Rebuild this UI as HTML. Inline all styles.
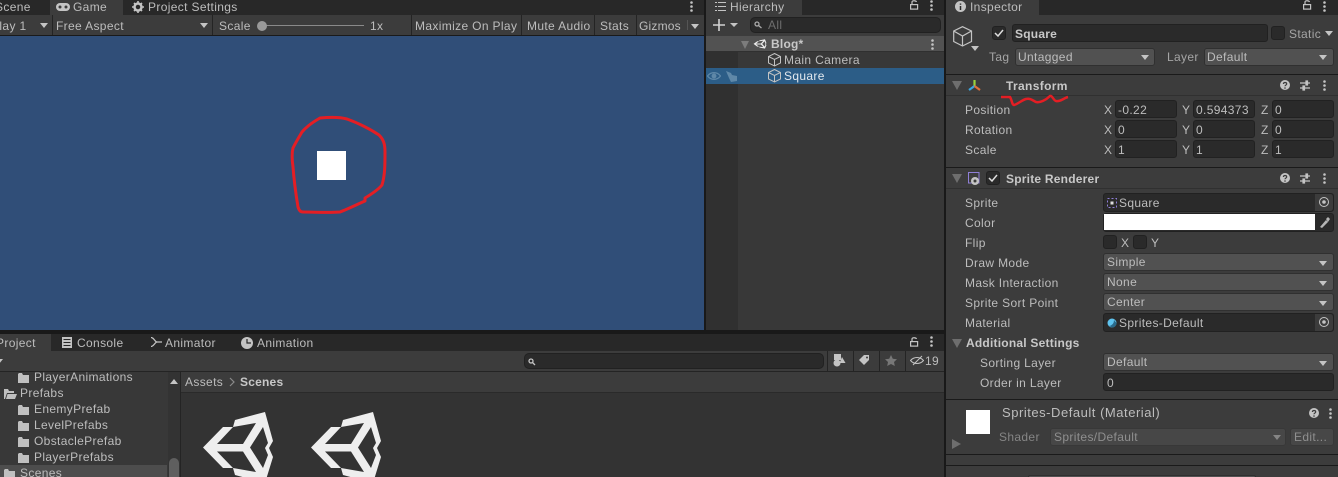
<!DOCTYPE html>
<html><head><meta charset="utf-8"><style>
html,body{margin:0;padding:0;background:#282828}
#r{position:relative;width:1338px;height:477px;overflow:hidden;background:#282828;font:12px/16px "Liberation Sans",sans-serif;color:#bdbdbd;letter-spacing:.35px}
#r div,#r span,#r svg{position:absolute}
.t{white-space:nowrap}
#r .b{font-weight:bold;color:#c8c8c8;letter-spacing:.22px}
.f{background:#2a2a2a;border:1px solid #212121;border-radius:3px;box-sizing:border-box}
.d{background:#515151;border:1px solid #303030;border-radius:3px;box-sizing:border-box}
.a{width:0;height:0;border-left:4px solid transparent;border-right:4px solid transparent;border-top:5px solid #c4c4c4}
.tr{width:0;height:0;border-left:5px solid transparent;border-right:5px solid transparent;border-top:9px solid #6e6e6e}
.v{width:1px;background:#242424}
.dv{height:1px;background:#1a1a1a}
</style></head><body><div id="r">
<svg width="0" height="0" style="left:0;top:0"><defs>
<g id="cube" fill="none" stroke="#c4c4c4" stroke-width="1"><path d="M6.5 .5L12.5 3.5V10L6.5 13L.5 10V3.5ZM.5 3.5L6.5 6.5L12.5 3.5M6.5 6.5V13"/></g>
<g id="dots" fill="#c4c4c4"><circle cx="1.5" cy="1.5" r="1.3"/><circle cx="1.5" cy="5.5" r="1.3"/><circle cx="1.5" cy="9.5" r="1.3"/></g>
<g id="lock" fill="none" stroke="#c4c4c4" stroke-width="1.2"><rect x=".6" y="4.6" width="7" height="4.5"/><path d="M2 4.500V2C2 .3 6 .3 6.500 2"/></g>
<g id="help"><circle cx="5" cy="5" r="5" fill="#c4c4c4"/><path d="M3.4 4C3.5 2 6.7 2 6.7 4C6.7 5 5 5 5 6.3" fill="none" stroke="#3c3c3c" stroke-width="1.2"/><circle cx="5" cy="8" r=".8" fill="#3c3c3c"/></g>
<g id="sl" stroke="#c4c4c4" stroke-width="1.2" fill="#c4c4c4"><path d="M0 3H10M0 8H10" /><rect x="6" y="1" width="1.5" height="4"/><rect x="3" y="6" width="1.5" height="4"/></g>
<g id="folder" fill="#c0c0c0"><path d="M0 2V11H11V3H5L4 1H1Z"/></g>
<g id="unity"><path fill-rule="evenodd" fill="#eeeeee" d="M203 447.500L223 427L233 427L235 420L265 412L273 441L269 448L273 457L265 483L235 475L233 468L223 468ZM217 444L243 444L256 423L233 427ZM217 451.500L243 451.500L256 472L233 468ZM250 447.500L263 427L268 443L265 448L268 455L263 468Z"/></g>
</defs></svg>

<!-- game panel -->
<div style="left:50px;top:0;width:73px;height:15px;background:#3c3c3c"></div>
<span class="t" style="left:-5px;top:-1px">Scene</span>
<svg style="left:56px;top:2px" width="14" height="10"><rect x="0" y="1" width="14" height="8" rx="4" fill="#c4c4c4"/><circle cx="4" cy="5" r="1.5" fill="#3c3c3c"/><circle cx="10" cy="5" r="1.5" fill="#3c3c3c"/></svg>
<span class="t" style="left:73px;top:-1px">Game</span>
<svg style="left:132px;top:1px" width="12" height="12"><circle cx="6" cy="6" r="3.5" fill="none" stroke="#c4c4c4" stroke-width="2.5"/><path d="M6 0V12M0 6H12M2 2L10 10M10 2L2 10" stroke="#c4c4c4" stroke-width="1.6" stroke-dasharray="2 8"/></svg>
<span class="t" style="left:148px;top:-1px">Project Settings</span>
<svg style="left:690px;top:1px" width="3" height="11"><use href="#dots"/></svg>

<div style="left:0;top:15px;width:704px;height:20px;background:#3c3c3c"></div>
<div class="dv" style="left:0;top:35px;width:704px"></div>
<span class="t" style="left:-26px;top:18px">Display 1</span>
<div class="a" style="left:40px;top:23px"></div>
<div class="v" style="left:52px;top:15px;height:20px"></div>
<span class="t" style="left:56px;top:18px">Free Aspect</span>
<div class="a" style="left:200px;top:23px"></div>
<div class="v" style="left:212px;top:15px;height:20px"></div>
<span class="t" style="left:219px;top:18px">Scale</span>
<div style="left:262px;top:25px;width:102px;height:1px;background:#8a8a8a"></div>
<div style="left:257px;top:21px;width:10px;height:10px;border-radius:50%;background:#999"></div>
<span class="t" style="left:370px;top:18px">1x</span>
<div class="v" style="left:411px;top:15px;height:20px"></div>
<span class="t" style="left:415px;top:18px">Maximize On Play</span>
<div class="v" style="left:521px;top:15px;height:20px"></div>
<span class="t" style="left:527px;top:18px">Mute Audio</span>
<div class="v" style="left:594px;top:15px;height:20px"></div>
<span class="t" style="left:600px;top:18px">Stats</span>
<div class="v" style="left:636px;top:15px;height:20px"></div>
<span class="t" style="left:639px;top:18px;letter-spacing:.2px">Gizmos</span>
<div class="v" style="left:687px;top:20px;height:10px;background:#555"></div>
<div class="a" style="left:691px;top:24px"></div>

<div style="left:0;top:36px;width:704px;height:294px;background:#304e78"></div>
<div style="left:317px;top:151px;width:29px;height:29px;background:#fff"></div>
<svg style="left:0;top:0" width="704" height="330"><path d="M320 118C330 117 340 117 347 119C358 123 370 129 379 135C384 140 385 145 385 152C385 165 385 175 382 185C378 190 370 195 365 198L365 201C358 204 348 209 340 212C328 213 315 212 303 212C300 212 299 210 298 207C296 195 294 180 293 167C292 160 292 152 293 148C296 142 299 137 302 132C307 126 313 122 320 118Z" fill="none" stroke="#e41e24" stroke-width="3" stroke-linejoin="round"/></svg>

<!-- dividers -->
<div style="left:704px;top:0;width:2px;height:334px;background:#191919"></div>
<div style="left:0;top:330px;width:945px;height:4px;background:#191919"></div>
<div style="left:944px;top:0;width:2px;height:477px;background:#191919"></div>

<!-- hierarchy -->
<div style="left:706px;top:0;width:96px;height:15px;background:#3c3c3c"></div>
<svg style="left:714px;top:1px" width="12" height="10" stroke="#c4c4c4"><path d="M4 1.5H12M4 5.5H12M4 9.5H12M1 1.5H3M1 5.5H3M1 9.5H3"/></svg>
<span class="t" style="left:730px;top:-1px">Hierarchy</span>
<svg style="left:910px;top:0" width="9" height="11"><use href="#lock"/></svg>
<svg style="left:930px;top:0" width="3" height="11"><use href="#dots"/></svg>
<div style="left:706px;top:15px;width:238px;height:21px;background:#3c3c3c"></div>
<svg style="left:713px;top:19px" width="12" height="12"><path d="M6 0V12M0 6H12" stroke="#d2d2d2" stroke-width="1.600"/></svg>
<div class="a" style="left:730px;top:23px;border-top-width:4px"></div>
<div class="f" style="left:750px;top:17px;width:191px;height:16px;border-radius:5px"></div>
<svg style="left:754px;top:21px" width="9" height="9" fill="none" stroke="#aaa" stroke-width="1.300"><circle cx="3" cy="3" r="2"/><path d="M4.500 4.500L7.500 7"/></svg>
<span class="t" style="left:768px;top:17px;color:#6f6f6f">All</span>
<div style="left:706px;top:36px;width:238px;height:294px;background:#383838"></div>
<div style="left:706px;top:52px;width:32px;height:278px;background:#303030"></div>
<div style="left:706px;top:36px;width:238px;height:16px;background:#525252"></div>
<div style="left:706px;top:51px;width:238px;height:1px;background:#303030"></div>
<div class="tr" style="left:741px;top:41px;border-left-width:4px;border-right-width:4px;border-top-width:8px;border-top-color:#7c7c7c"></div>
<svg style="left:753px;top:39px" width="14" height="10" viewBox="200 410 76 76" preserveAspectRatio="none"><use href="#unity"/></svg>
<span class="t b" style="left:771px;top:36px">Blog*</span>
<svg style="left:931px;top:39px" width="3" height="11"><use href="#dots"/></svg>
<svg style="left:768px;top:53px" width="13" height="14"><use href="#cube"/></svg>
<span class="t" style="left:784px;top:52px">Main Camera</span>
<div style="left:706px;top:68px;width:238px;height:16px;background:#2c5d87"></div>
<svg style="left:707px;top:71px" width="14" height="10" fill="none" stroke="#5f88a8" stroke-width="1.300"><path d="M.5 5C4 .5 10 .5 13.500 5C10 9.500 4 9.500 .5 5Z"/><circle cx="7" cy="5" r="1.800" fill="#5f88a8"/></svg>
<svg style="left:725px;top:70px" width="13" height="13"><path d="M1 1L6 3L7 5L12 6V11L6 12L4 8L1 1Z" fill="#5f88a8"/></svg>
<svg style="left:768px;top:69px" width="13" height="14"><use href="#cube"/></svg>
<span class="t" style="left:784px;top:68px;color:#e2e8ee">Square</span>

<!-- project -->
<div style="left:0;top:334px;width:51px;height:17px;background:#3c3c3c"></div>
<span class="t" style="left:-4px;top:335px">Project</span>
<svg style="left:62px;top:337px" width="10" height="11"><rect width="10" height="11" fill="#c4c4c4"/><path d="M1.500 2.500H8.500M1.500 5.500H8.500M1.500 8.500H8.500" stroke="#282828"/></svg>
<span class="t" style="left:77px;top:335px">Console</span>
<svg style="left:151px;top:337px" width="12" height="10" fill="none" stroke="#c4c4c4" stroke-width="1.300"><path d="M0 .5C3 .5 4 5 6 5C4 5 3 9.500 0 9.500M6 5H11"/></svg>
<span class="t" style="left:165px;top:335px">Animator</span>
<svg style="left:241px;top:337px" width="12" height="12"><circle cx="6" cy="6" r="6" fill="#c4c4c4"/><path d="M6 2V6H10" fill="none" stroke="#282828" stroke-width="1.200"/></svg>
<span class="t" style="left:257px;top:335px">Animation</span>
<svg style="left:910px;top:337px" width="9" height="11"><use href="#lock"/></svg>
<svg style="left:930px;top:336px" width="3" height="11"><use href="#dots"/></svg>
<div style="left:0;top:351px;width:944px;height:20px;background:#3c3c3c"></div>
<div class="dv" style="left:0;top:371px;width:944px;background:#242424"></div>
<div class="a" style="left:-5px;top:359px"></div>
<div class="f" style="left:524px;top:353px;width:300px;height:16px;border-radius:5px"></div>
<svg style="left:528px;top:358px" width="8" height="8" fill="none" stroke="#c4c4c4" stroke-width="1.300"><circle cx="3" cy="3" r="2"/><path d="M4.500 4.500L7 7"/></svg>
<div class="v" style="left:827px;top:351px;height:20px"></div>
<div class="v" style="left:853px;top:351px;height:20px"></div>
<div class="v" style="left:879px;top:351px;height:20px"></div>
<div class="v" style="left:905px;top:351px;height:20px"></div>
<svg style="left:833px;top:354px" width="13" height="13" fill="#c4c4c4"><rect x="1" y="0" width="7" height="6"/><circle cx="4" cy="9" r="3.500"/><path d="M9 3L12.500 9H6.500Z"/></svg>
<svg style="left:859px;top:355px" width="11" height="11"><path d="M0 5L5 0H10V5L5 10Z" fill="#c4c4c4"/><circle cx="8" cy="2.500" r="1" fill="#3c3c3c"/></svg>
<svg style="left:885px;top:355px" width="12" height="11"><path d="M6 0L7.800 3.800L12 4.300L9 7L9.800 11L6 9L2.200 11L3 7L0 4.300L4.200 3.800Z" fill="#777"/></svg>
<svg style="left:910px;top:355px" width="14" height="11" fill="none" stroke="#c4c4c4"><path d="M.5 5.500C4 1.500 10 1.500 13.500 5.500C10 9.500 4 9.500 .5 5.500ZM3 10L12 1"/></svg>
<span class="t" style="left:925px;top:353px">19</span>

<div style="left:0;top:372px;width:168px;height:105px;background:#383838"></div>
<div style="left:168px;top:372px;width:12px;height:105px;background:#333"></div>
<div style="left:180px;top:372px;width:1px;height:105px;background:#242424"></div>
<div class="a" style="left:170px;top:379px;border-top:0;border-bottom:5px solid #c4c4c4"></div>
<div style="left:169px;top:458px;width:10px;height:30px;border-radius:5px;background:#5f5f5f"></div>
<svg style="left:18px;top:372px" width="12" height="12"><use href="#folder"/></svg>
<span class="t" style="left:34px;top:369px">PlayerAnimations</span>
<svg style="left:4px;top:388px" width="13" height="12"><path d="M0 1H4L5 3H10V5H3L1 11H0ZM3.500 6H13L11 11H2Z" fill="#c0c0c0"/></svg>
<span class="t" style="left:20px;top:385px">Prefabs</span>
<svg style="left:18px;top:404px" width="12" height="12"><use href="#folder"/></svg>
<span class="t" style="left:34px;top:401px">EnemyPrefab</span>
<svg style="left:18px;top:420px" width="12" height="12"><use href="#folder"/></svg>
<span class="t" style="left:34px;top:417px">LevelPrefabs</span>
<svg style="left:18px;top:436px" width="12" height="12"><use href="#folder"/></svg>
<span class="t" style="left:34px;top:433px">ObstaclePrefab</span>
<svg style="left:18px;top:452px" width="12" height="12"><use href="#folder"/></svg>
<span class="t" style="left:34px;top:449px">PlayerPrefabs</span>
<div style="left:0;top:465px;width:167px;height:12px;background:#4d4d4d"></div>
<svg style="left:4px;top:468px" width="12" height="12"><use href="#folder"/></svg>
<span class="t" style="left:20px;top:465px">Scenes</span>
<div style="left:181px;top:372px;width:763px;height:20px;background:#3c3c3c"></div>
<div class="dv" style="left:181px;top:392px;width:763px;background:#2a2a2a"></div>
<div style="left:181px;top:393px;width:763px;height:84px;background:#333"></div>
<span class="t" style="left:185px;top:374px">Assets</span>
<svg style="left:229px;top:377px" width="7" height="10" fill="none" stroke="#8a8a8a" stroke-width="1.200"><path d="M1 1L5 5L1 9"/></svg>
<span class="t b" style="left:240px;top:374px">Scenes</span>
<svg style="left:0;top:0" width="400" height="477"><use href="#unity"/><use href="#unity" x="108"/></svg>

<!-- inspector -->
<div style="left:946px;top:0;width:392px;height:477px;background:#3c3c3c"></div>
<div style="left:1039px;top:0;width:299px;height:15px;background:#282828"></div>
<svg style="left:955px;top:1px" width="11" height="11"><circle cx="5.500" cy="5.500" r="5.500" fill="#c4c4c4"/><path d="M5.500 2.500V3.800M5.500 5V9" stroke="#282828" stroke-width="1.500"/></svg>
<span class="t" style="left:970px;top:-1px">Inspector</span>
<svg style="left:1303px;top:0" width="9" height="11"><use href="#lock"/></svg>
<svg style="left:1323px;top:1px" width="3" height="11"><use href="#dots"/></svg>
<svg style="left:953px;top:26px" width="20" height="21"><g fill="none" stroke="#c4c4c4" stroke-width="1.200"><path d="M9.500 .7L18.500 5V15.500L9.500 20L.7 15.500V5ZM.7 5L9.500 10L18.500 5M9.500 10V20"/></g></svg>
<div class="a" style="left:971px;top:46px"></div>
<div class="f" style="left:992px;top:26px;width:14px;height:14px"></div>
<svg style="left:994px;top:28px" width="10" height="10" fill="none" stroke="#ddd" stroke-width="1.500"><path d="M1 5L4 8L9 2"/></svg>
<div class="f" style="left:1012px;top:24px;width:256px;height:18px"></div>
<span class="t b" style="left:1015px;top:26px">Square</span>
<div class="f" style="left:1271px;top:26px;width:14px;height:14px"></div>
<span class="t" style="left:1289px;top:26px;color:#a5a5a5">Static</span>
<div class="a" style="left:1325px;top:31px"></div>
<span class="t" style="left:989px;top:49px;color:#a5a5a5">Tag</span>
<div class="d" style="left:1015px;top:48px;width:140px;height:18px"></div>
<span class="t" style="left:1018px;top:49px">Untagged</span>
<div class="a" style="left:1141px;top:55px"></div>
<span class="t" style="left:1167px;top:49px;color:#a5a5a5">Layer</span>
<div class="d" style="left:1204px;top:48px;width:130px;height:18px"></div>
<span class="t" style="left:1207px;top:49px">Default</span>
<div class="a" style="left:1319px;top:55px"></div>
<div class="dv" style="left:946px;top:74px;width:392px"></div>
<div class="dv" style="left:946px;top:95px;width:392px;background:#303030"></div>
<div class="tr" style="left:952px;top:81px;border-top-color:#6e6e6e"></div>
<svg style="left:967px;top:79px" width="15" height="13" stroke-width="2.200"><path d="M7.500 7V1" stroke="#9ad23c"/><path d="M7.500 7L2 11" stroke="#3aa6e0"/><path d="M7.500 7L13 11" stroke="#e0703a"/></svg>
<span class="t b" style="left:1006px;top:78px;letter-spacing:.35px">Transform</span>
<svg style="left:946px;top:60px" width="150" height="60"><path d="M55 37L64 37C66 40 66 45 68 45C72 44 76 40 80 39C84 38 86 40 90 42C94 43 100 40 104 36C106 35 108 41 110 41C114 42 118 38 122 37" fill="none" stroke="#e41e24" stroke-width="2.500"/></svg>
<svg style="left:1280px;top:80px" width="10" height="10"><use href="#help"/></svg>
<svg style="left:1300px;top:80px" width="10" height="11"><use href="#sl"/></svg>
<svg style="left:1323px;top:80px" width="3" height="11"><use href="#dots"/></svg>

<span class="t" style="left:965px;top:102px">Position</span>
<span class="t" style="left:1104px;top:102px">X</span><div class="f" style="left:1115px;top:100px;width:62px;height:18px"></div><span class="t" style="left:1118px;top:102px">-0.22</span>
<span class="t" style="left:1182px;top:102px">Y</span><div class="f" style="left:1193px;top:100px;width:62px;height:18px"></div><span class="t" style="left:1196px;top:102px">0.594373</span>
<span class="t" style="left:1261px;top:102px">Z</span><div class="f" style="left:1272px;top:100px;width:62px;height:18px"></div><span class="t" style="left:1275px;top:102px">0</span>
<span class="t" style="left:965px;top:122px">Rotation</span>
<span class="t" style="left:1104px;top:122px">X</span><div class="f" style="left:1115px;top:120px;width:62px;height:18px"></div><span class="t" style="left:1118px;top:122px">0</span>
<span class="t" style="left:1182px;top:122px">Y</span><div class="f" style="left:1193px;top:120px;width:62px;height:18px"></div><span class="t" style="left:1196px;top:122px">0</span>
<span class="t" style="left:1261px;top:122px">Z</span><div class="f" style="left:1272px;top:120px;width:62px;height:18px"></div><span class="t" style="left:1275px;top:122px">0</span>
<span class="t" style="left:965px;top:142px">Scale</span>
<span class="t" style="left:1104px;top:142px">X</span><div class="f" style="left:1115px;top:140px;width:62px;height:18px"></div><span class="t" style="left:1118px;top:142px">1</span>
<span class="t" style="left:1182px;top:142px">Y</span><div class="f" style="left:1193px;top:140px;width:62px;height:18px"></div><span class="t" style="left:1196px;top:142px">1</span>
<span class="t" style="left:1261px;top:142px">Z</span><div class="f" style="left:1272px;top:140px;width:62px;height:18px"></div><span class="t" style="left:1275px;top:142px">1</span>

<div class="dv" style="left:946px;top:167px;width:392px"></div>
<div class="dv" style="left:946px;top:188px;width:392px;background:#303030"></div>
<div class="tr" style="left:952px;top:174px"></div>
<svg style="left:967px;top:171px" width="14" height="15"><rect x="1.500" y="1.500" width="10.500" height="10.500" fill="none" stroke="#8f7fd8"/><circle cx="8" cy="10" r="4" fill="#c4c4c4"/><circle cx="8" cy="10" r="1.500" fill="#3c3c3c"/></svg>
<div class="f" style="left:986px;top:171px;width:14px;height:14px"></div>
<svg style="left:988px;top:173px" width="10" height="10" fill="none" stroke="#ddd" stroke-width="1.500"><path d="M1 5L4 8L9 2"/></svg>
<span class="t b" style="left:1006px;top:171px">Sprite Renderer</span>
<svg style="left:1280px;top:173px" width="10" height="10"><use href="#help"/></svg>
<svg style="left:1300px;top:173px" width="10" height="11"><use href="#sl"/></svg>
<svg style="left:1323px;top:173px" width="3" height="11"><use href="#dots"/></svg>

<span class="t" style="left:965px;top:195px">Sprite</span>
<div class="f" style="left:1103px;top:193px;width:231px;height:19px"></div>
<div style="left:1315px;top:194px;width:18px;height:17px;background:#3c3c3c;border-radius:0 3px 3px 0"></div>
<svg style="left:1318px;top:196px" width="12" height="12" fill="none" stroke="#c4c4c4"><circle cx="6" cy="6" r="4.500"/><circle cx="6" cy="6" r="1.300" fill="#c4c4c4"/></svg>
<svg style="left:1107px;top:198px" width="10" height="10"><rect x=".5" y=".5" width="9" height="9" fill="none" stroke="#8f7fd8" stroke-dasharray="2 2"/><rect x="3.500" y="3.500" width="3" height="3" fill="#ddd"/></svg>
<span class="t" style="left:1119px;top:195px">Square</span>

<span class="t" style="left:965px;top:215px">Color</span>
<div class="f" style="left:1103px;top:213px;width:231px;height:19px"></div>
<div style="left:1104px;top:214px;width:211px;height:16px;background:#fff"></div>
<svg style="left:1319px;top:216px" width="12" height="12"><path d="M1 11L7 4L9 6L3 12ZM7 3L9 1L11 3L9 6Z" fill="#b5b5b5"/></svg>

<span class="t" style="left:965px;top:235px">Flip</span>
<div class="f" style="left:1103px;top:235px;width:14px;height:14px"></div>
<span class="t" style="left:1121px;top:235px">X</span>
<div class="f" style="left:1133px;top:235px;width:14px;height:14px"></div>
<span class="t" style="left:1151px;top:235px">Y</span>

<span class="t" style="left:965px;top:255px">Draw Mode</span>
<div class="d" style="left:1103px;top:253px;width:231px;height:18px"></div>
<span class="t" style="left:1107px;top:254px">Simple</span>
<div class="a" style="left:1319px;top:261px"></div>

<span class="t" style="left:965px;top:275px">Mask Interaction</span>
<div class="d" style="left:1103px;top:273px;width:231px;height:18px"></div>
<span class="t" style="left:1107px;top:274px">None</span>
<div class="a" style="left:1319px;top:281px"></div>

<span class="t" style="left:965px;top:295px">Sprite Sort Point</span>
<div class="d" style="left:1103px;top:293px;width:231px;height:18px"></div>
<span class="t" style="left:1107px;top:294px">Center</span>
<div class="a" style="left:1319px;top:301px"></div>

<span class="t" style="left:965px;top:315px">Material</span>
<div class="f" style="left:1103px;top:313px;width:231px;height:19px"></div>
<div style="left:1315px;top:314px;width:18px;height:17px;background:#3c3c3c;border-radius:0 3px 3px 0"></div>
<svg style="left:1318px;top:316px" width="12" height="12" fill="none" stroke="#c4c4c4"><circle cx="6" cy="6" r="4.500"/><circle cx="6" cy="6" r="1.300" fill="#c4c4c4"/></svg>
<svg style="left:1107px;top:318px" width="10" height="10"><circle cx="5" cy="5" r="4.500" fill="#5fc3ee"/><path d="M5 9.500A4.500 4.500 0 0 0 9.500 5L7 2Q7 7 2 8Z" fill="#2a6a8a"/></svg>
<span class="t" style="left:1119px;top:315px">Sprites-Default</span>

<div class="tr" style="left:952px;top:339px"></div>
<span class="t b" style="left:966px;top:335px">Additional Settings</span>
<span class="t" style="left:980px;top:355px">Sorting Layer</span>
<div class="d" style="left:1103px;top:353px;width:231px;height:18px"></div>
<span class="t" style="left:1107px;top:354px">Default</span>
<div class="a" style="left:1319px;top:361px"></div>
<span class="t" style="left:980px;top:375px">Order in Layer</span>
<div class="f" style="left:1103px;top:373px;width:231px;height:18px"></div>
<span class="t" style="left:1107px;top:375px">0</span>

<div class="dv" style="left:946px;top:399px;width:392px"></div>
<div style="left:966px;top:410px;width:24px;height:24px;background:#fff"></div>
<span class="t" style="left:1002px;top:405px;font-size:13px;letter-spacing:.53px">Sprites-Default (Material)</span>
<svg style="left:1309px;top:408px" width="10" height="10"><use href="#help"/></svg>
<svg style="left:1329px;top:408px" width="3" height="11"><use href="#dots"/></svg>
<span class="t" style="left:999px;top:429px;color:#858585">Shader</span>
<div class="d" style="left:1050px;top:428px;width:236px;height:18px;background:#474747;border-color:#383838"></div>
<span class="t" style="left:1054px;top:429px;color:#8f8f8f">Sprites/Default</span>
<div class="a" style="left:1273px;top:435px;border-top-color:#858585"></div>
<div class="d" style="left:1290px;top:428px;width:44px;height:18px;background:#474747;border-color:#383838"></div>
<span class="t" style="left:1294px;top:429px;color:#8f8f8f">Edit...</span>
<svg style="left:952px;top:439px" width="9" height="10"><path d="M0 0L9 5L0 10Z" fill="#6e6e6e"/></svg>
<div class="dv" style="left:946px;top:454px;width:392px"></div>
<div class="dv" style="left:946px;top:465px;width:392px"></div>
<div style="left:1028px;top:475px;width:228px;height:4px;background:#515151;border:1px solid #303030;border-radius:3px;box-sizing:border-box"></div>
</div></body></html>
